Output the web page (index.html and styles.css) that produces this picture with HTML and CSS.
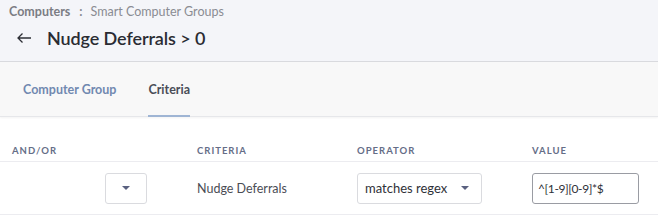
FILE: index.html
```html
<!DOCTYPE html>
<html>
<head>
<meta charset="utf-8">
<link rel="stylesheet" href="styles.css">
</head>
<body>
<header class="page-header">
  <div class="breadcrumb"><span class="crumb-root">Computers</span><span class="crumb-sep">:</span><span class="crumb-leaf">Smart Computer Groups</span></div>
  <div class="title-row">
    <svg class="back" width="16" height="12" viewBox="0 0 16 12"><path d="M15 6H2M6.5 1.5L2 6l4.5 4.5" fill="none" stroke="#2d2f36" stroke-width="1.3"/></svg>
    <h1 class="title">Nudge Deferrals &gt; 0</h1>
  </div>
</header>
<nav class="tabs">
  <div class="tab">Computer Group</div>
  <div class="tab active">Criteria</div>
</nav>
<section class="criteria">
  <div class="row head">
    <div class="c-andor">AND/OR</div>
    <div class="c-crit">CRITERIA</div>
    <div class="c-op">OPERATOR</div>
    <div class="c-val">VALUE</div>
  </div>
  <div class="row body">
    <div class="c-andor"><div class="select small"><span class="caret"></span></div></div>
    <div class="c-crit">Nudge Deferrals</div>
    <div class="c-op"><div class="select op"><span class="sel-text">matches regex</span><span class="caret"></span></div></div>
    <div class="c-val"><div class="input">^[1-9][0-9]*$</div></div>
  </div>
</section>
</body>
</html>
```
FILE: styles.css
```css
* { box-sizing: border-box; }
html, body { margin: 0; padding: 0; background: #fff; }
body { font-family: "Lato", "Open Sans", sans-serif; color: #2d2f36; width: 658px; height: 221px; overflow: hidden; }
.page-header { background: #f4f5f9; height: 62px; border-bottom: 1px solid #d9dade; padding: 5px 0 0 9px; }
.breadcrumb { font-size: 12.5px; color: #8a8c93; line-height: 14px; display: flex; align-items: center; }
.crumb-root { font-weight: 700; color: #7b7d84; }
.crumb-sep { margin: 0 8px 0 9px; font-weight: 700; }
.title-row { display: flex; align-items: center; margin-top: 8px; padding-left: 7px; }
.back { margin-right: 15px; }
.title { margin: 0; font-size: 18px; font-weight: 600; color: #2a2c33; line-height: 22px; letter-spacing: -0.1px; }
.tabs { height: 55px; background: #f8f8f8; border-bottom: 1px solid #e6e7ea; box-shadow: 0 1px 2px rgba(0,0,0,0.05); display: flex; padding-left: 23px; gap: 32px; }
.tab { font-size: 12.5px; font-weight: 700; color: #7189b0; line-height: 56px; border-bottom: 2px solid transparent; height: 55px; }
.tab.active { color: #4a4d57; border-bottom-color: #9fb5d4; }
.criteria { padding-top: 28px; }
.row { display: flex; align-items: center; border-bottom: 1px solid #ececf0; }
.row.head { height: 17px; align-items: flex-start; font-size: 9.5px; font-weight: 700; letter-spacing: 1px; color: #656e87; }
.row.body { height: 53px; font-size: 12.5px; color: #4b4d55; }
.c-andor { width: 197px; padding-left: 12px; }
.c-crit { width: 160px; }
.c-op { width: 175px; }
.c-val { flex: 1; }
.row.body .c-andor { padding-left: 105px; }
.select { height: 31px; border: 1px solid #dadbdf; border-radius: 3px; display: flex; align-items: center; background: #fff; }
.select.small { width: 42px; justify-content: center; }
.select.op { width: 125px; padding-left: 7px; justify-content: space-between; padding-right: 12px; }
.caret { width: 0; height: 0; border-left: 4px solid transparent; border-right: 4px solid transparent; border-top: 4px solid #5a6180; }
.sel-text { color: #2f3138; font-size: 13px; }
.input { width: 107px; height: 31px; border: 1px solid #9a9ca3; border-radius: 3px; padding-left: 5px; line-height: 29px; color: #2f3138; font-size: 12px; letter-spacing: -0.4px; }
```
